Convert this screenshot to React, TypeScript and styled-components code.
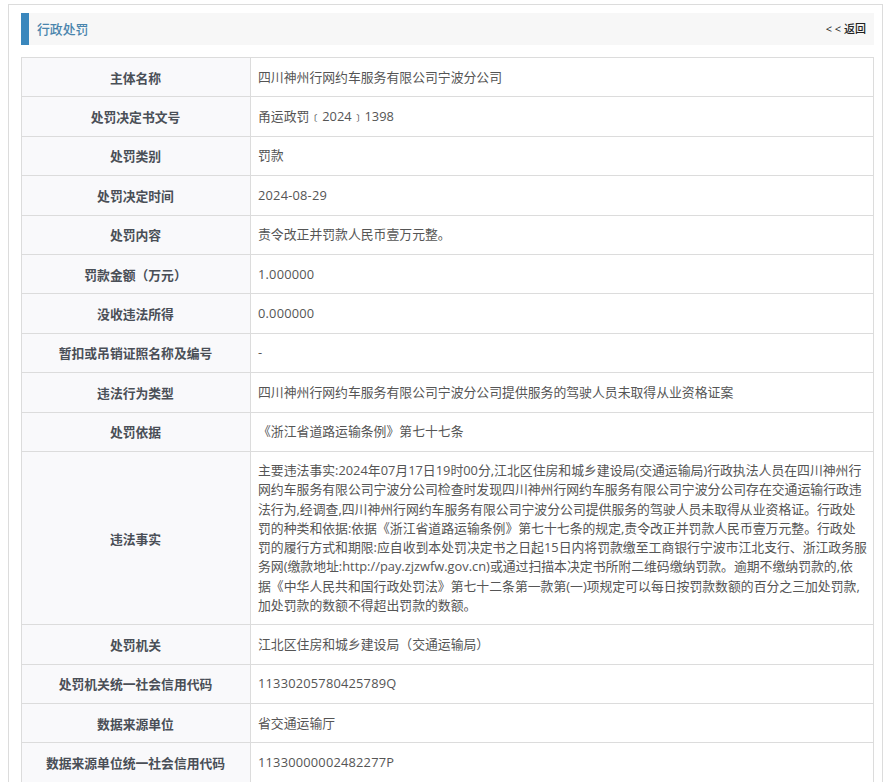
import styled, { createGlobalStyle } from "styled-components";

const GlobalStyle = createGlobalStyle`
  html, body {
    margin: 0;
    padding: 0;
    background: #fff;
    overflow: hidden;
    height: 782px;
  }
  body {
    font-family: "Open Sans", "Noto Sans CJK SC", sans-serif;
    font-size: 12.85px;
    color: #555;
  }
`;

const Card = styled.div`
  box-sizing: border-box;
  margin: 4px 9px 0 8px;
  padding: 8px 8px 0 12px;
  border: 1px solid #dcdcdc;
  border-bottom: none;
  height: 778px;
  overflow: hidden;
`;

const Header = styled.div`
  display: flex;
  align-items: center;
  justify-content: space-between;
  height: 32px;
  box-sizing: border-box;
  background: #f7f7f7;
  border-left: 8px solid #3a87bd;
  padding: 0 8px 2px 8px;
  margin-bottom: 12px;
`;

const Title = styled.div`
  color: #4a85ad;
  font-size: 12.85px;
  font-weight: 500;
`;

const BackLink = styled.a`
  color: #222;
  font-size: 11px;
  font-weight: 500;
  text-decoration: none;
`;

const Table = styled.table`
  width: 853px;
  border-collapse: collapse;
  table-layout: fixed;
`;

const Label = styled.th`
  box-sizing: border-box;
  width: 229px;
  height: 39.4px;
  padding: 8px 9px 8px 8px;
  border: 1px solid #dcdcdc;
  background: #f9f9fb;
  color: #4a4f57;
  font-size: 12.8px;
  font-weight: 700;
  text-align: center;
`;

const Value = styled.td<{ $numeric?: boolean }>`
  box-sizing: border-box;
  padding: 9px 7px;
  border: 1px solid #dcdcdc;
  color: #555;
  line-height: 19.3px;
  letter-spacing: ${(p) => (p.$numeric ? "0.2px" : "0")};
`;

const FactLine = styled.div`
  white-space: nowrap;
`;

const rows: { label: string; value: string | string[]; numeric?: boolean }[] = [
  { label: "主体名称", value: "四川神州行网约车服务有限公司宁波分公司" },
  { label: "处罚决定书文号", value: "甬运政罚﹝2024﹞1398" },
  { label: "处罚类别", value: "罚款" },
  { label: "处罚决定时间", value: "2024-08-29", numeric: true },
  { label: "处罚内容", value: "责令改正并罚款人民币壹万元整。" },
  { label: "罚款金额（万元）", value: "1.000000", numeric: true },
  { label: "没收违法所得", value: "0.000000", numeric: true },
  { label: "暂扣或吊销证照名称及编号", value: "-" },
  { label: "违法行为类型", value: "四川神州行网约车服务有限公司宁波分公司提供服务的驾驶人员未取得从业资格证案" },
  { label: "处罚依据", value: "《浙江省道路运输条例》第七十七条" },
  {
    label: "违法事实",
    value: [
      "主要违法事实:2024年07月17日19时00分,江北区住房和城乡建设局(交通运输局)行政执法人员在四川神州行",
      "网约车服务有限公司宁波分公司检查时发现四川神州行网约车服务有限公司宁波分公司存在交通运输行政违",
      "法行为,经调查,四川神州行网约车服务有限公司宁波分公司提供服务的驾驶人员未取得从业资格证。行政处",
      "罚的种类和依据:依据《浙江省道路运输条例》第七十七条的规定,责令改正并罚款人民币壹万元整。行政处",
      "罚的履行方式和期限:应自收到本处罚决定书之日起15日内将罚款缴至工商银行宁波市江北支行、浙江政务服",
      "务网(缴款地址:http://pay.zjzwfw.gov.cn)或通过扫描本决定书所附二维码缴纳罚款。逾期不缴纳罚款的,依",
      "据《中华人民共和国行政处罚法》第七十二条第一款第(一)项规定可以每日按罚款数额的百分之三加处罚款,",
      "加处罚款的数额不得超出罚款的数额。",
    ],
  },
  { label: "处罚机关", value: "江北区住房和城乡建设局（交通运输局）" },
  { label: "处罚机关统一社会信用代码", value: "11330205780425789Q", numeric: true },
  { label: "数据来源单位", value: "省交通运输厅" },
  { label: "数据来源单位统一社会信用代码", value: "11330000002482277P", numeric: true },
];

export default function App() {
  return (
    <>
      <GlobalStyle />
      <Card>
        <Header>
          <Title>行政处罚</Title>
          <BackLink href="#">&lt; &lt; 返回</BackLink>
        </Header>
        <Table>
          <tbody>
            {rows.map((row) => (
              <tr key={row.label}>
                <Label>{row.label}</Label>
                <Value $numeric={row.numeric}>
                  {Array.isArray(row.value)
                    ? row.value.map((line) => <FactLine key={line}>{line}</FactLine>)
                    : row.value}
                </Value>
              </tr>
            ))}
          </tbody>
        </Table>
      </Card>
    </>
  );
}
